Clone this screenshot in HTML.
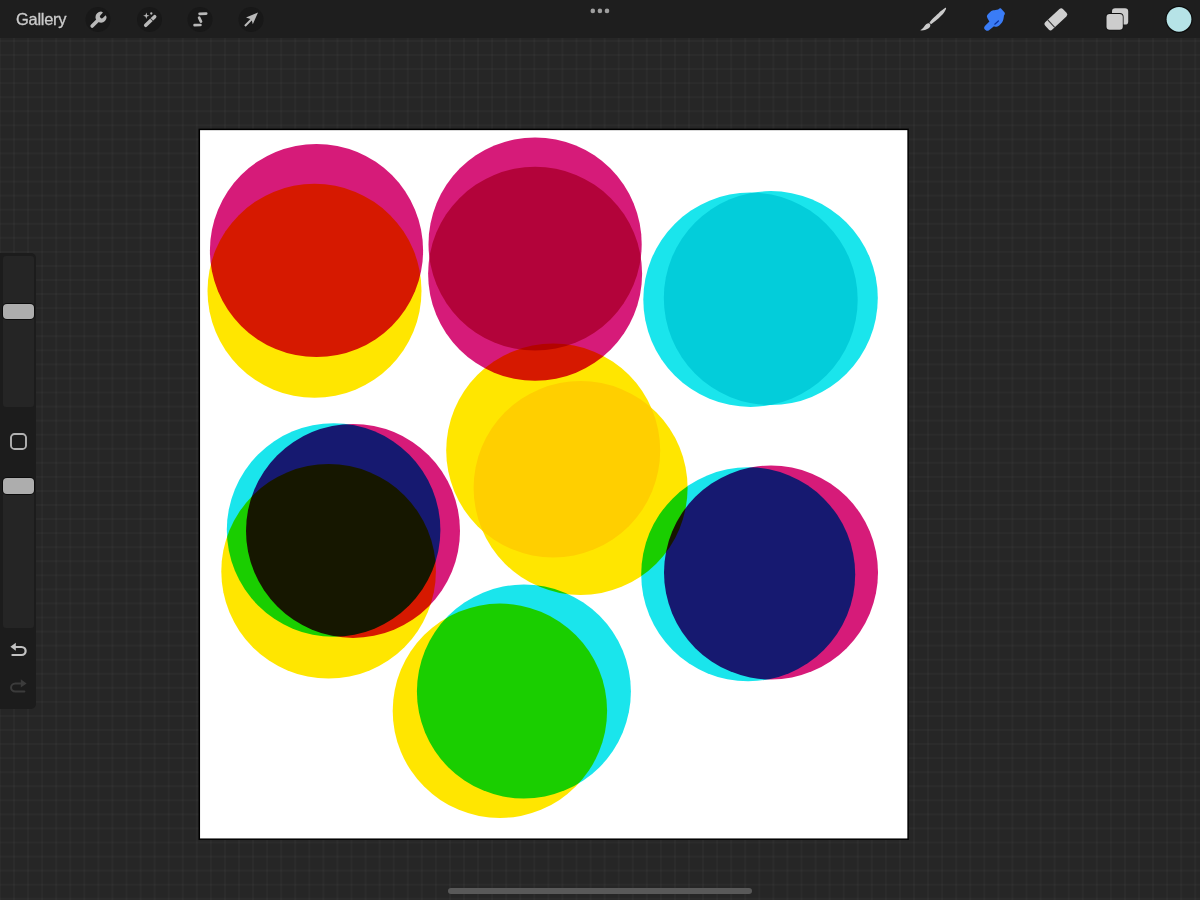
<!DOCTYPE html>
<html>
<head>
<meta charset="utf-8">
<title>Procreate</title>
<style>
  html, body { margin: 0; padding: 0; background-color: #262626; }
  body {
    width: 1200px; height: 900px; overflow: hidden; position: relative;
    background-color: #262626;
    font-family: "Liberation Sans", sans-serif;
  }
  /* faint block grid in the workspace */
  #grid {
    position: absolute; left: 0; top: 0; width: 1200px; height: 900px;
    background-image:
      linear-gradient(to right, rgba(255,255,255,0.022) 0, rgba(255,255,255,0.022) 2px, transparent 2px),
      linear-gradient(to bottom, rgba(255,255,255,0.022) 0, rgba(255,255,255,0.022) 2px, transparent 2px);
    background-size: 14.066px 14.066px;
    background-position: -1px -2.2px;
  }
  #topbar {
    position: absolute; left: 0; top: 0; width: 1200px; height: 38px;
    background: #1e1e1e;
  }
  #gallery {
    position: absolute; left: 15.5px; top: 10px; line-height: 19px;
    font-size: 16.5px; color: #cbcbcb; letter-spacing: -0.3px;
    -webkit-text-stroke: 0.3px #cbcbcb; will-change: transform;
  }
  .ico { position: absolute; left: 0; top: 0; }
  #art { position: absolute; left: 0; top: 0; width: 1200px; height: 900px; isolation: isolate; }
  #art circle { mix-blend-mode: multiply; }
  #side {
    position: absolute; left: -4px; top: 253px; width: 40px; height: 455.5px;
    background: #1c1c1c; border-radius: 0 5px 5px 0;
  }
  .track { position: absolute; left: 7px; width: 31px; background: #252525; border-radius: 3px; }
  .handle {
    position: absolute; left: 7px; width: 30.5px; height: 15.5px; border-radius: 4px;
    background: #adadad; box-shadow: 0 0 0 1px #0c0c0c;
  }
  #art, .ico, #gallery, #side, #homebar { filter: blur(0.45px); }
  #homebar {
    position: absolute; left: 448.3px; top: 888.3px; width: 303.4px; height: 5.4px;
    border-radius: 3px; background: #595959;
  }
</style>
</head>
<body>
<div id="grid"></div>

<!-- canvas -->
<svg id="art" width="1200" height="900" viewBox="0 0 1200 900">
  <rect x="199.3" y="129.4" width="708.8" height="709.8" fill="#fff" stroke="#000" stroke-width="1.5"/>
  <g>
    <circle cx="316.5" cy="250.5" r="106.6" fill="#d61b79"/>
    <circle cx="314.5" cy="290.8" r="107" fill="#ffe600"/>
    <circle cx="535.1" cy="244" r="106.6" fill="#d61b79"/>
    <circle cx="535.1" cy="273.8" r="107" fill="#d61b79"/>
    <circle cx="750.5" cy="299.7" r="107.2" fill="#1ae5ec"/>
    <circle cx="770.8" cy="298.1" r="107" fill="#1ae5ec"/>
    <circle cx="553.2" cy="450.5" r="107" fill="#ffe600"/>
    <circle cx="580.6" cy="488" r="107" fill="#ffe600"/>
    <circle cx="333.6" cy="530" r="106.8" fill="#1ae5ec"/>
    <circle cx="353" cy="530.9" r="107" fill="#d61b79"/>
    <circle cx="328.6" cy="571.3" r="107.3" fill="#ffe600"/>
    <circle cx="748.2" cy="574.3" r="107" fill="#1ae5ec"/>
    <circle cx="771" cy="572.5" r="107" fill="#d61b79"/>
    <circle cx="499.9" cy="710.8" r="107.2" fill="#ffe600"/>
    <circle cx="523.9" cy="691.5" r="107" fill="#1ae5ec"/>
  </g>
</svg>

<!-- top toolbar -->
<div id="topbar"></div>
<div id="gallery">Gallery</div>

<svg class="ico" width="1200" height="40" viewBox="0 0 1200 40">
  <!-- dark discs behind left tools -->
  <g fill="#181818">
    <circle cx="98" cy="19.5" r="12.5"/>
    <circle cx="149.5" cy="19.5" r="12.5"/>
    <circle cx="200" cy="19.5" r="12.5"/>
    <circle cx="251" cy="19.5" r="12.5"/>
  </g>

  <!-- wrench -->
  <g transform="translate(101 17.2) rotate(45) scale(1.06)" fill="#b9b9b9">
    <rect x="-1.7" y="3" width="3.4" height="10.5" rx="1.7"/>
    <path d="M -3.65 -3.8 A 5.25 5.25 0 1 0 3.65 -3.8 L 1.75 -4.4 L 1.75 -1 A 1.75 1.75 0 0 1 -1.75 -1 L -1.75 -4.4 Z"/>
  </g>

  <!-- magic wand -->
  <g fill="#b9b9b9">
    <g transform="translate(150.2 21) rotate(-44)">
      <rect x="-8" y="-1.8" width="16" height="3.6" rx="1.8"/>
      <rect x="1.6" y="-2" width="0.8" height="4" fill="#2a2a2a"/>
    </g>
    <path d="M146.3 12.6 L147.1 15 L149.5 15.8 L147.1 16.6 L146.3 19 L145.5 16.6 L143.1 15.8 L145.5 15 Z"/>
    <circle cx="151.3" cy="13.5" r="1.15"/>
  </g>

  <!-- selection S -->
  <g fill="none" stroke="#b9b9b9" stroke-width="2.7" stroke-linecap="round" stroke-linejoin="round">
    <path d="M199.6 13.8 L206.2 13.6"/>
    <path d="M199.1 17.6 L201 21.6"/>
    <path d="M194.6 25.2 L200.4 25"/>
  </g>

  <!-- transform arrow -->
  <path d="M258 12.4 L246 17.6 L250.4 19 L244.2 25.2 L245.7 26.7 L251.8 20.5 L252.8 24.2 Z" fill="#b9b9b9"/>

  <!-- three dots -->
  <g fill="#9e9e9e">
    <circle cx="592.8" cy="10.9" r="2.3"/>
    <circle cx="599.9" cy="10.9" r="2.3"/>
    <circle cx="607" cy="10.9" r="2.3"/>
  </g>

  <!-- brush -->
  <g fill="#cbcbcb">
    <path d="M946 7.9 C 946.6 8.6 944.6 12.2 941.4 15.6 C 937.6 19.6 932.6 23.4 931 24.2 L 929.4 22.6 C 930.4 21 934.6 16.6 938.6 13.2 C 942 10.2 945.4 7.4 946 7.9 Z"/>
    <path d="M929.7 23.7 C 931 25 930.3 27.2 928.2 28.6 C 925.6 30.3 922.2 30.7 920 30.3 C 922.2 29.4 923.2 28 924.4 26.3 C 926 23.9 928.4 22.6 929.7 23.7 Z"/>
  </g>

  <!-- smudge finger (active, blue) -->
  <path d="M984.6 29.2 C 983.6 28 984.2 26.6 985.6 25.2 L 989.4 21.6 C 988.4 20 987.2 18.2 986.9 16.6 C 986.8 15.6 987.6 14.6 988.6 13.6 L 991 11.2 C 992 10.4 993 10.2 994.2 10.2 L 998.2 9.6 C 999.2 8.6 1000.2 8 1001 8.4 L 1004.6 12.4 C 1005.2 13.4 1004.8 14.4 1004 15.4 C 1003.6 18 1003.4 20.4 1002.2 22.2 C 1000.6 24.4 998.6 26.4 996.6 26.8 C 995.4 27 994.6 26.6 994 26.2 L 989 30.2 C 987.4 31.2 985.6 30.6 984.6 29.2 Z" fill="#3a7cf6"/>
  <path d="M994.8 24.2 L 998.4 21" stroke="#0b2f9c" stroke-width="1.2" stroke-linecap="round" fill="none"/>

  <!-- eraser -->
  <g transform="translate(1055.9 19.3) rotate(-43)">
    <rect x="-12.2" y="-5.1" width="24.4" height="10.2" rx="2.6" fill="#cfcfcf"/>
    <rect x="-6.9" y="-5.1" width="1" height="10.2" fill="#333"/>
  </g>

  <!-- layers -->
  <rect x="1112" y="8.2" width="16.2" height="16.4" rx="3.2" fill="#cdcdcd"/>
  <rect x="1105.7" y="13.1" width="17.9" height="17.4" rx="3.8" fill="#131313"/>
  <rect x="1106.5" y="13.9" width="16.3" height="15.9" rx="3.2" fill="#cdcdcd"/>

  <!-- colour disc -->
  <circle cx="1179" cy="19.3" r="13.6" fill="#0c0c0c"/>
  <circle cx="1179" cy="19.3" r="12.4" fill="#b6e3e7"/>
</svg>

<!-- left sidebar -->
<div id="side">
  <div class="track" style="top:2.5px; height:151px;"></div>
  <div class="handle" style="top:50.5px;"></div>
  <div class="track" style="top:224px; height:150.5px;"></div>
  <div class="handle" style="top:225.2px;"></div>
</div>
<svg class="ico" style="top:0" width="60" height="900" viewBox="0 0 60 900">
  <!-- modify button -->
  <rect x="11" y="434" width="15" height="15" rx="3.6" fill="none" stroke="#b2b2b2" stroke-width="1.9"/>
  <!-- undo -->
  <g fill="none" stroke="#c2c2c2" stroke-width="2.2" stroke-linecap="round" stroke-linejoin="round">
    <path d="M14 647 L21.4 647 C 27 647 27 655 21.4 655 L12.4 655"/>
  </g>
  <path d="M10.4 646.8 L15.8 642.8 L15.8 650.8 Z" fill="#c2c2c2"/>
  <!-- redo (dim) -->
  <g fill="none" stroke="#3b3b3b" stroke-width="2" stroke-linecap="round" stroke-linejoin="round">
    <path d="M23 683.6 L15.4 683.6 C 9.6 683.6 9.6 691.6 15.4 691.6 L24.4 691.6"/>
  </g>
  <path d="M26.6 683.4 L20.8 679.2 L20.8 687.6 Z" fill="#3b3b3b"/>
</svg>

<div id="homebar"></div>
</body>
</html>
